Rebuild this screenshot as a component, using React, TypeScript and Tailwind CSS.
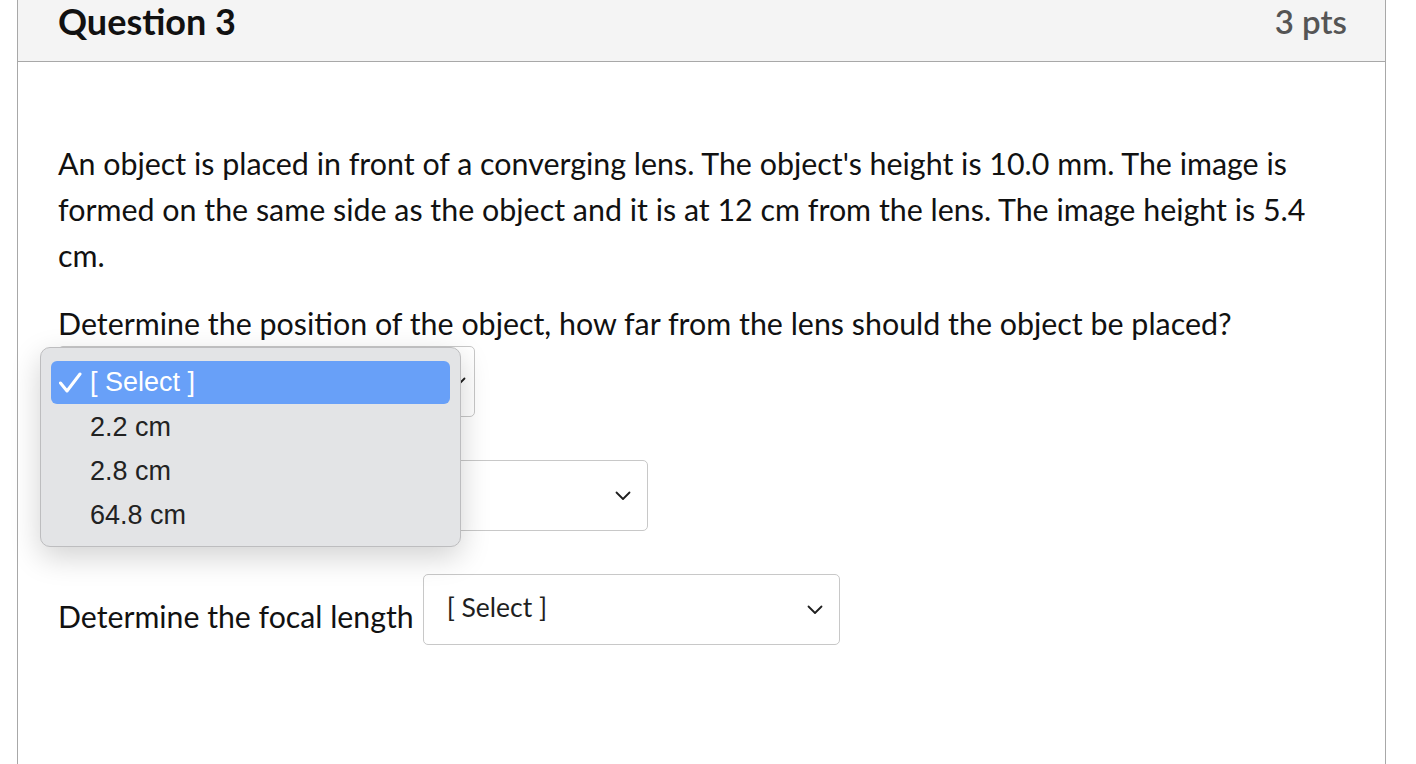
import React from "react";

const Chevron = () => (
  <svg width="16" height="10" viewBox="0 0 16 10" fill="none" className="shrink-0">
    <path d="M1.5 1.5 L8 8 L14.5 1.5" stroke="#1f1f1f" strokeWidth="1.8" strokeLinecap="round" strokeLinejoin="round" />
  </svg>
);

const SelectBox = ({ text, className = "" }: { text?: string; className?: string }) => (
  <div
    className={
      "h-[71px] w-[417px] rounded-[5px] border border-[#c8c8c8] bg-white flex items-center justify-between pl-[23px] " +
      className
    }
  >
    <span className="text-[26.5px] text-[#1f1f1f] leading-none -mt-[5px]">{text}</span>
    <Chevron />
  </div>
);

export default function App() {
  return (
    <div className="w-full h-[764px] bg-white overflow-hidden pl-[17px] font-['Lato','Noto_Sans',sans-serif] text-[#111]">
      <div className="relative w-[1369px] h-[764px] border-l border-r border-[#a8a8a8]">
        <div className="h-[62px] bg-[#f4f4f4] border-b border-[#a8a8a8] flex items-start justify-between pl-[40px] pr-[38px]">
          <h2 className="text-[36px] font-bold leading-[42px] text-[#111]">Question 3</h2>
          <span className="text-[33px] font-semibold leading-[42px] text-[#555]">3 pts</span>
        </div>

        <div className="pl-[40px] pr-[40px] pt-[78px]">
          <p className="text-[30.4px] leading-[46px] w-[1260px]">
            An object is placed in front of a converging lens. The object's height is 10.0 mm. The image is formed on the same side as the object and it is at 12 cm from the lens. The image height is 5.4 cm.
          </p>
          <p className="text-[30.4px] leading-[46px] mt-[22px]">
            Determine the position of the object, how far from the lens should the object be placed?
          </p>
          <div className="flex items-center">
            <SelectBox className="w-[416px] h-[70px] pr-[8px]" />
          </div>
          <div className="flex items-center mt-[43px]">
            <div className="w-[173px]" />
            <SelectBox className="pr-[16px]" />
          </div>
          <div className="flex items-center mt-[43px]">
            <span className="text-[30.25px] leading-[46px] mr-[9px] mt-[13px]">Determine the focal length</span>
            <SelectBox text="[ Select ]" className="pr-[16px]" />
          </div>
        </div>

        <div className="absolute left-[22px] top-[347px] w-[421px] h-[200px] rounded-[10px] border border-[#bdbdbf] bg-[#e3e4e6] shadow-[0_10px_30px_rgba(0,0,0,0.18)] px-[10px] pt-[13px] font-['Liberation_Sans','Arial',sans-serif] text-[27px] text-[#222]">
          <div className="h-[43px] rounded-[6px] bg-[#68a0f8] text-white flex items-center pl-[8px]">
            <svg width="31" height="22" viewBox="0 0 31 22" fill="none" className="shrink-0">
              <path d="M1.5 11 L8 19 L21 2" stroke="#ffffff" strokeWidth="3" strokeLinecap="round" strokeLinejoin="round" />
            </svg>
            <span>[ Select ]</span>
          </div>
          <div className="h-[44px] flex items-center pl-[39px] pt-[2px]">2.2 cm</div>
          <div className="h-[44px] flex items-center pl-[39px] pt-[2px]">2.8 cm</div>
          <div className="h-[44px] flex items-center pl-[39px] pt-[2px]">64.8 cm</div>
        </div>
      </div>
    </div>
  );
}
